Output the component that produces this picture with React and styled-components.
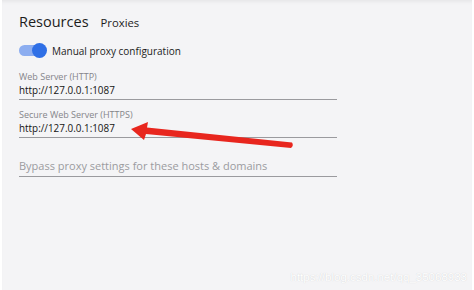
import React from 'react';
import styled, {createGlobalStyle} from 'styled-components';

const GlobalStyle = createGlobalStyle`
    html, body {
        margin: 0;
        padding: 0;
        background: #ffffff;
    }
    body {
        font-family: "Open Sans", "Noto Sans", sans-serif;
    }
`;

const Page = styled.div`
    position: relative;
    width: 470px;
    height: 290px;
    margin: 0 2px;
    background: #f4f4f6;
    box-shadow: inset 0 4px 4px -3px rgba(0, 0, 0, 0.08);
    padding: 10px 0 0 17px;
    box-sizing: border-box;
    overflow: hidden;
`;

const Header = styled.div`
    display: flex;
    align-items: baseline;
    gap: 12px;
    color: #1c1c1c;
    h1 {
        margin: 0;
        font-size: 14.5px;
        font-weight: 400;
        line-height: 24px;
    }
    span {
        font-size: 11.3px;
        line-height: 24px;
    }
`;

const ToggleRow = styled.label`
    display: flex;
    align-items: center;
    gap: 7px;
    margin-top: 8px;
    height: 15px;
    font-size: 10px;
    color: #1c1c1c;
`;

const Switch = styled.div`
    position: relative;
    width: 26px;
    height: 11px;
    border-radius: 6px;
    background: #8cadf0;
    &::after {
        content: '';
        position: absolute;
        right: -2px;
        top: -2px;
        width: 15px;
        height: 15px;
        border-radius: 50%;
        background: #2f6fe6;
    }
`;

const Fields = styled.div`
    display: flex;
    flex-direction: column;
    width: 318px;
    margin-top: 13px;
`;

const Field = styled.div`
    display: flex;
    flex-direction: column;
    border-bottom: 1px solid #9a9a9e;
    padding-bottom: 2px;
    margin-bottom: ${p => p.$gap || 9}px;
    label {
        font-size: 9px;
        line-height: 12px;
        color: #85858a;
    }
    input {
        border: none;
        background: transparent;
        padding: 0;
        margin: 0;
        font-family: inherit;
        font-size: 9.9px;
        line-height: 14px;
        height: 14px;
        color: #141414;
        outline: none;
        &::placeholder {
            color: #9b9b9f;
        }
    }
    input.wide {
        font-size: 11px;
        line-height: 16px;
        height: 16px;
    }
`;

const Arrow = styled.svg`
    position: absolute;
    left: 0;
    top: 0;
    pointer-events: none;
`;

const Watermark = styled.div`
    position: absolute;
    right: 5px;
    bottom: 7px;
    font-family: "Liberation Sans", Arial, sans-serif;
    font-size: 11.5px;
    color: #ffffff;
    text-shadow: 0 0 1px rgba(0, 0, 0, 0.18);
`;

export default function App() {
    return (
        <>
            <GlobalStyle/>
            <Page>
                <Header>
                    <h1>Resources</h1>
                    <span>Proxies</span>
                </Header>
                <ToggleRow>
                    <Switch/>
                    Manual proxy configuration
                </ToggleRow>
                <Fields>
                    <Field>
                        <label>Web Server (HTTP)</label>
                        <input value='http://127.0.0.1:1087' onChange={() => null}/>
                    </Field>
                    <Field $gap={20}>
                        <label>Secure Web Server (HTTPS)</label>
                        <input value='http://127.0.0.1:1087' onChange={() => null}/>
                    </Field>
                    <Field>
                        <input className='wide' placeholder='Bypass proxy settings for these hosts & domains'/>
                    </Field>
                </Fields>
                <Arrow width="470" height="290" viewBox="0 0 470 290">
                    <path d="M129 129 L146 122 L145 127.5 L290 142.5 Q292 145.5 289 148 L144 134 L142 140 Z" fill="#e8261e"/>
                </Arrow>
                <Watermark>https://blog.csdn.net/qq_35068933</Watermark>
            </Page>
        </>
    );
}
